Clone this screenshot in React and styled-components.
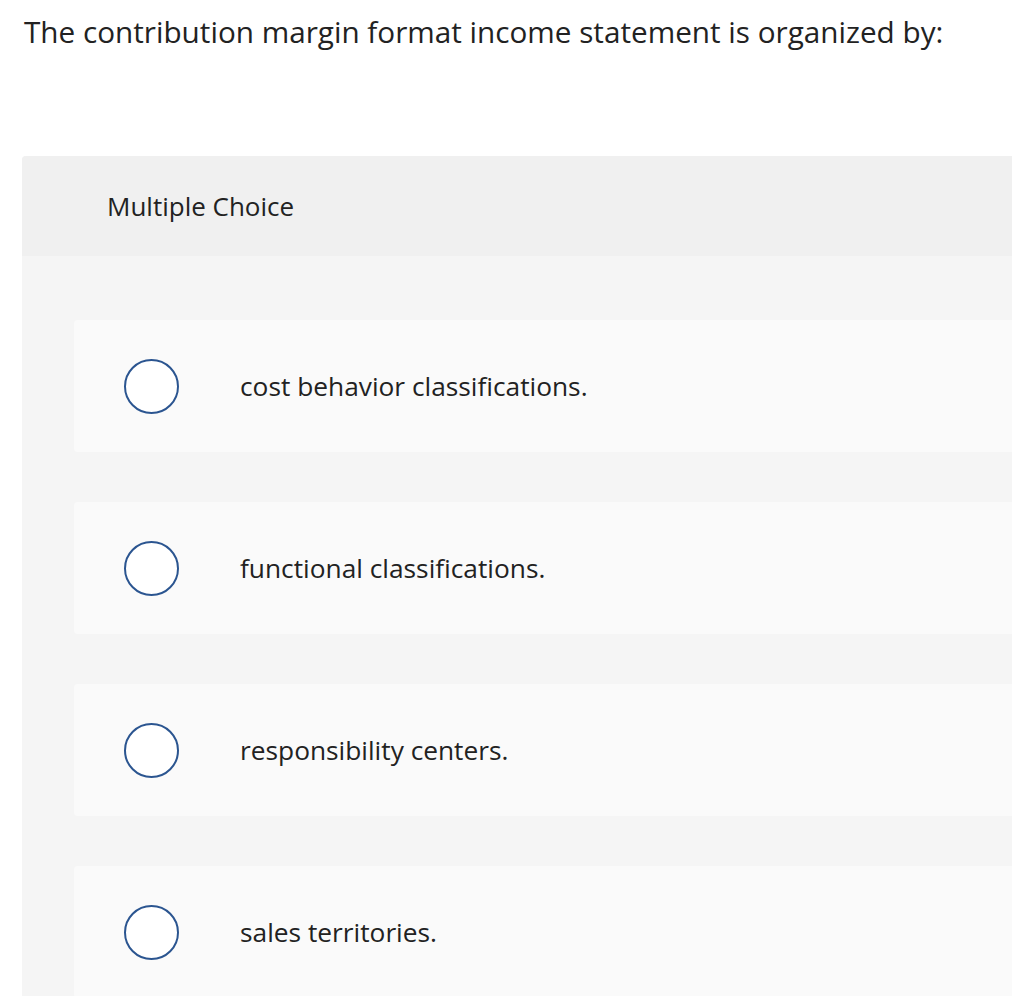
import React from 'react';
import styled, { createGlobalStyle } from 'styled-components';

const GlobalStyle = createGlobalStyle`
  body {
    margin: 0;
    background: #ffffff;
    font-family: "Open Sans", "Liberation Sans", sans-serif;
    color: #222222;
    overflow: hidden;
  }
`;

const Page = styled.div`
  width: 1012px;
  height: 996px;
  overflow: hidden;
`;

const Question = styled.h1`
  margin: 0;
  padding: 12px 0 0 24px;
  height: 156px;
  box-sizing: border-box;
  font-size: 29.7px;
  font-weight: 400;
  line-height: 40px;
  color: #222222;
`;

const Panel = styled.section`
  margin-left: 22px;
  width: 1100px;
  background: #f5f5f5;
  border-radius: 4px 0 0 0;
`;

const PanelHeader = styled.header`
  height: 100px;
  display: flex;
  align-items: center;
  padding-left: 85px;
  background: #f0f0f0;
  border-radius: 4px 0 0 0;
  font-size: 26px;
  color: #222222;
`;

const Options = styled.div`
  display: flex;
  flex-direction: column;
  gap: 50px;
  padding: 64px 0 40px 52px;
`;

const Option = styled.label`
  height: 132px;
  display: flex;
  align-items: center;
  padding-left: 50px;
  background: #fafafa;
  border-radius: 4px 0 0 4px;
  cursor: pointer;
`;

const Radio = styled.span`
  width: 55px;
  height: 55px;
  box-sizing: border-box;
  border: 2px solid #2b5590;
  border-radius: 50%;
  background: #ffffff;
  flex-shrink: 0;
`;

const OptionText = styled.span`
  margin-left: 61px;
  font-size: 26.3px;
  color: #222222;
`;

const choices = [
  'cost behavior classifications.',
  'functional classifications.',
  'responsibility centers.',
  'sales territories.'
];

const App = () => (
  <Page>
    <GlobalStyle />
    <Question>
      The contribution margin format income statement is organized by:
    </Question>
    <Panel>
      <PanelHeader>Multiple Choice</PanelHeader>
      <Options>
        {choices.map(choice => (
          <Option key={choice}>
            <Radio />
            <OptionText>{choice}</OptionText>
          </Option>
        ))}
      </Options>
    </Panel>
  </Page>
);

export default App;
